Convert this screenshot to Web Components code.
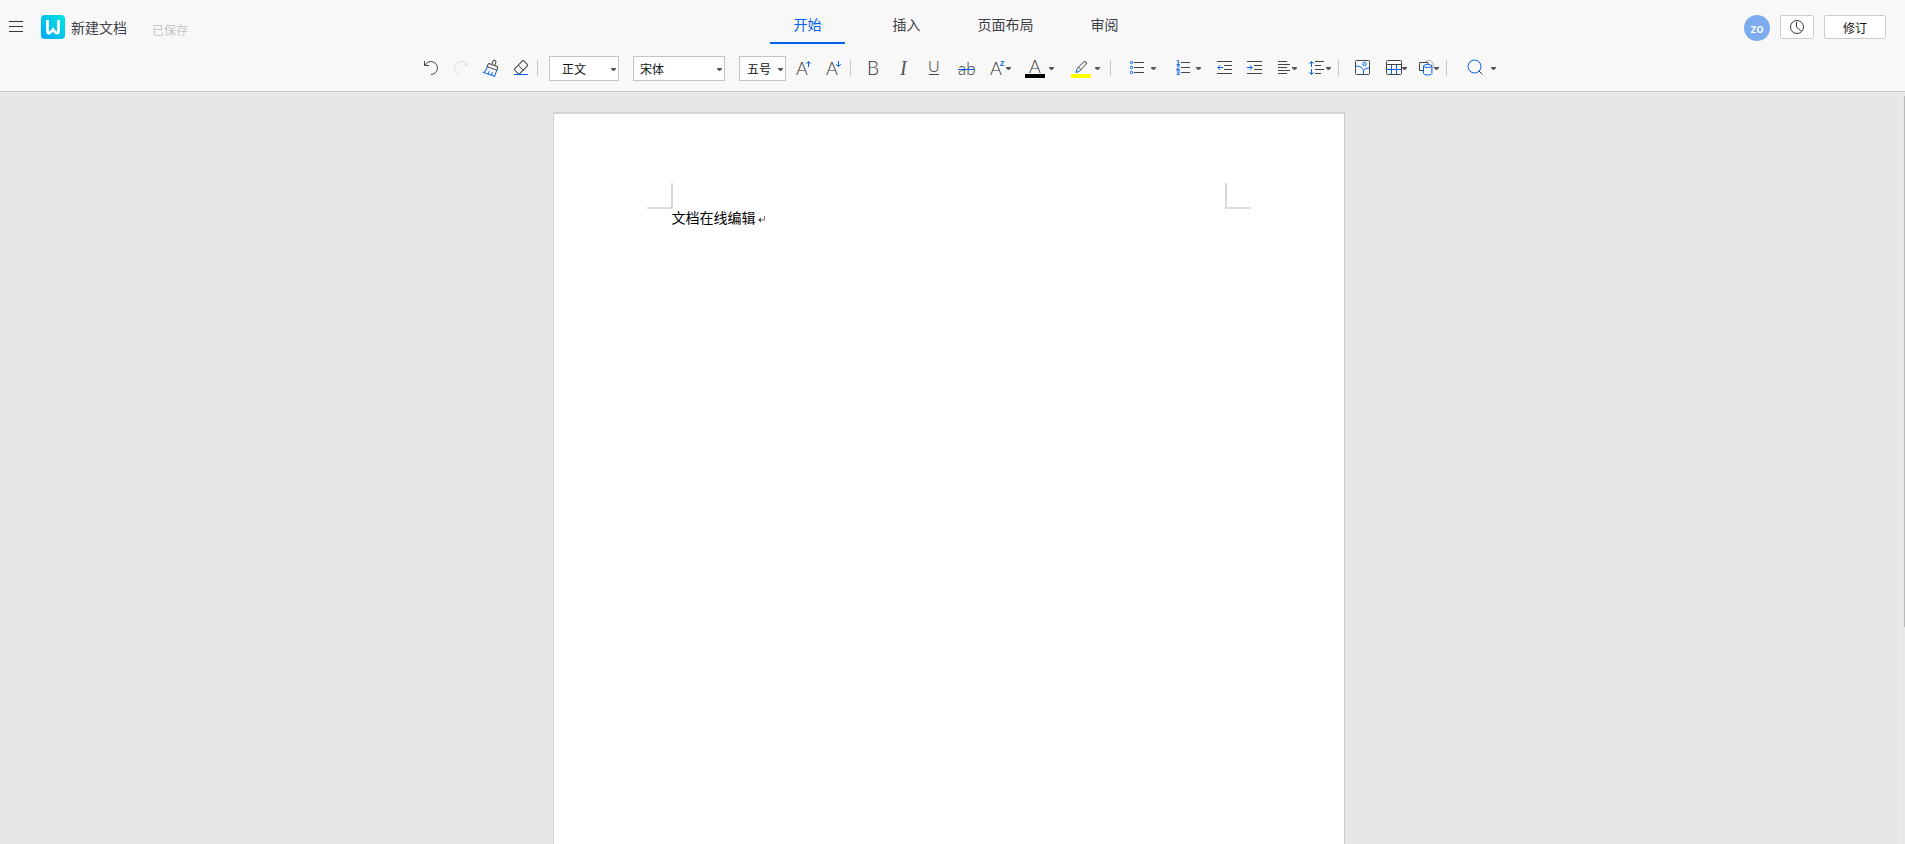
<!DOCTYPE html>
<html lang="zh-CN">
<head>
<meta charset="utf-8">
<title>新建文档</title>
<style>
html, body { margin: 0; height: 100%; }
body { font-family: "Noto Sans CJK SC", "Liberation Sans", sans-serif; color: #3d4047; background: #e7e7e7; overflow: hidden; }
</style>
</head>
<body>
<doc-app></doc-app>
<script>
const define = (name, html, setup) => {
  const template = document.createElement('template');
  template.innerHTML = html;
  customElements.define(name, class extends HTMLElement {
    connectedCallback() {
      if (this.shadowRoot) return;
      this.attachShadow({ mode: 'open' }).append(template.content.cloneNode(true));
      if (setup) setup(this, this.shadowRoot);
    }
  });
};

const letter = (ch, x, y, size, extra = '') =>
  `<text x="${x}" y="${y}" font-size="${size}" font-family="Lato, sans-serif" font-weight="300" fill="#333" stroke="none" ${extra}>${ch}</text>`;
const digits = ['1', '2', '3'].map((d, i) =>
  `<text x="1" y="${7 + i * 5}" font-size="7" font-family="Liberation Sans, sans-serif" font-weight="700" fill="#0062ee" stroke="none">${d}</text>`).join('');

/* Icons are drawn on a 20px high canvas; "b" is the accent stroke. */
const ICONS = {
  undo: [16, '<path d="M1.5 3v4.5H6M2 7.3A6.5 6.5 0 1 1 8 16.5"/>'],
  redo: [16, '<path stroke="#dedede" d="M14.5 3v4.5H10M14 7.3A6.5 6.5 0 1 0 8 16.5"/>'],
  painter: [16, '<g transform="rotate(20 8 10)"><path d="M7.500 6.500V3.200a1.600 1.600 0 0 1 3.200 0v3.300M4 10V7.500q0-1 1-1h8.200q1 0 1 1V10z"/><path class="b" d="M4 10v2.500q0 2.500-1.500 4.200H14.200V10M7.500 16.500v-3M10.800 16.500v-3"/></g>'],
  eraser: [16, '<rect x="1.500" y="5.800" width="13" height="7" rx="1.200" transform="rotate(-45 8 9.300)"/><path d="M5.200 7.200l5 5"/><path class="b" d="M1 16.500h14"/>'],
  grow: [16, letter('A', 0, 17, 18) + '<path class="b" d="M12.500 9V3.500M10.300 5.700l2.200-2.200 2.200 2.200"/>'],
  shrink: [16, letter('A', 0, 17, 18) + '<path class="b" d="M12.500 3v5.500M10.300 6.300l2.200 2.200 2.200-2.200"/>'],
  bold: [16, letter('B', 1, 17, 19)],
  italic: [16, '<text x="4" y="17" font-size="20" font-family="Liberation Serif, serif" font-style="italic" fill="#555" stroke="none">I</text>'],
  underline: [16, letter('U', 2, 14, 16) + '<path d="M3 16.500h10"/>'],
  strike: [20, letter('ab', 3, 17, 17) + '<path class="b" d="M3 11.500h16"/>'],
  super: [16, letter('A', 0, 17, 18) + '<text x="10" y="8" font-size="7" font-family="Liberation Sans, sans-serif" font-weight="700" fill="#0062ee" stroke="none">Z</text>'],
  color: [20, letter('A', 4, 15, 18) + '<path fill="#000" stroke="none" d="M0 16h20v4H0z"/>'],
  marker: [20, '<path d="M6 10.500L13 3.800q1-.8 2 .2t.2 2L8.500 13.200M7.500 9.200l2.500 2.500"/><path class="b" d="M6.200 10.500l-1.200 4 3.600-1.300"/><path fill="#ff0" stroke="none" d="M0 16h20v4H0z"/>'],
  bullets: [16, '<g class="b"><circle cx="1.500" cy="4.500" r="1.200"/><circle cx="1.500" cy="9.500" r="1.200"/><circle cx="1.500" cy="14.500" r="1.200"/></g><path d="M4 4.500h10M4 9.500h10M4 14.500h10"/>'],
  numbers: [16, digits + '<path d="M6 4.500h9M6 9.500h9M6 14.500h9"/>'],
  outdent: [16, '<path d="M1 3.500h15M8 7.500h8M8 11.500h8M1 15.500h15"/><path class="b" d="M7 9.500H2M4 7.300L1.800 9.500 4 11.700"/>'],
  indent: [16, '<path d="M1 3.500h15M8 7.500h8M8 11.500h8M1 15.500h15"/><path class="b" d="M1 9.500h5M4 7.300l2.200 2.200L4 11.700"/>'],
  align: [14, '<path d="M0 3.500h9M0 6.500h12M0 9.500h9M0 12.500h12M0 15.500h9"/>'],
  spacing: [16, '<path d="M5 3.500h9M5 7.500h6M5 11.500h9M5 15.500h6"/><path class="b" d="M1.500 9V3.500M-.700 5.700l2.200-2.200 2.200 2.200M1.500 11v5.500M-.700 14.300l2.200 2.200 2.200-2.200"/>'],
  picture: [16, '<rect x="1.500" y="2.500" width="14" height="14" rx="1"/><path class="b" d="M2 8q6 0 7.500 4.500v4M9.500 12.500q2-3 6-2.500"/><circle class="b" cx="10.500" cy="6" r="1.700"/>'],
  table: [16, '<path class="b" d="M1 11.500h14M5.500 7v9M10.500 7v9"/><rect x=".5" y="2.500" width="15" height="14" rx="1"/><path d="M.5 6.500h15"/>'],
  shapes: [16, '<circle cx="10.500" cy="7.500" r="5" stroke="#aaa"/><path fill="#f8f8f8" d="M1.500 4.500h8.500v8H1.500z"/><path class="b" fill="#f8f8f8" d="M5.500 8v7.500q0 1.500 4.200 1.500t4.200-1.500V8q0-1.500-4.200-1.500T5.500 8q0 1.500 4.200 1.500T13.900 8"/>'],
  search: [16, '<circle class="b" cx="7.500" cy="8.500" r="6.500"/><path d="M12 13l3.500 3.500"/>']
};

define('tool-button', `<style>
  :host { display: block; flex: none; width: 30px; }
  :host([size="m"]) { width: 32px; }
  :host([size="l"]) { width: 36px; }
  :host([size="xl"]) { width: 45px; }
  :host([size="xxl"]) { width: 46px; }
  button { box-sizing: border-box; width: 100%; height: 24px; margin: 0; padding: 0; border: 0; background: none; display: flex; align-items: center; justify-content: center; cursor: pointer; }
  :host([menu]) button { justify-content: flex-start; padding-left: 9px; }
  :host([menu="split"]) button { padding-left: 8px; gap: 4px; }
  :host([menu="list"]) button { padding-left: 11px; gap: 5px; }
  :host([menu="wide"]) button { padding-left: 12px; gap: 8px; }
  svg { flex: none; fill: none; stroke: #444; overflow: visible; }
  .b { stroke: #0062ee; }
  .caret { fill: #555; stroke: none; display: none; }
  :host([menu]) .caret { display: block; }
</style><button type="button"><svg class="icon" height="20" aria-hidden="true"></svg><svg class="caret" width="5" height="20" aria-hidden="true"><path d="M0 9h5v1L3 12H2L0 10z"/></svg></button>`,
(host, root) => {
  const [width, art] = ICONS[host.getAttribute('icon')];
  const icon = root.querySelector('.icon');
  icon.setAttribute('width', width);
  icon.innerHTML = art;
  root.querySelector('button').setAttribute('aria-label', host.getAttribute('label'));
});

define('tool-divider', `<style>
  :host { display: block; flex: none; width: 1px; height: 16px; margin: 4px 8px 0 1px; background: #c8c8c8; }
</style>`);

define('tool-select', `<style>
  :host { display: block; flex: none; position: relative; width: 70px; margin-right: 14px; --inset: 12px; }
  :host([kind="font"]) { width: 92px; --inset: 6px; }
  :host([kind="size"]) { width: 47px; margin-right: 3px; --inset: 7px; }
  :host([kind="style"]) { margin-left: 3px; }
  select { appearance: none; box-sizing: border-box; display: block; width: 100%; height: 25px; margin: 0; padding: 0 0 0 var(--inset); border: 1px solid #c4c4c4; border-radius: 0; background: #fff; color: #111; font: 12px/22px "Noto Sans CJK SC", sans-serif; }
  svg { position: absolute; right: 3px; top: 12px; fill: #555; pointer-events: none; }
</style><select></select><svg width="5" height="3" aria-hidden="true"><path d="M0 0h5v1L3 3H2L0 1z"/></svg>`,
(host, root) => {
  const select = root.querySelector('select');
  select.setAttribute('aria-label', host.getAttribute('label'));
  select.add(new Option(host.getAttribute('value')));
});

define('tab-item', `<style>
  :host { display: block; width: 75px; }
  button { box-sizing: border-box; width: 100%; height: 44px; margin: 0; padding: 6px 0 0; border: 0; border-bottom: 2px solid transparent; background: none; color: #3d4047; font: 14px/36px "Noto Sans CJK SC", sans-serif; white-space: nowrap; cursor: pointer; }
  :host([active]) button { color: #0062ee; border-bottom-color: #0062ee; }
</style><button type="button"><slot></slot></button>`);

define('doc-identity', `<style>
  :host { display: flex; align-items: flex-start; padding: 15px 0 0 9px; }
  button { margin: 0; padding: 6px 0 0; border: 0; background: none; display: block; }
  svg { display: block; }
  .logo { margin-left: 18px; }
  h1 { margin: 0 0 0 6px; font-size: 14px; line-height: 24px; font-weight: 400; }
  span { margin: 3px 0 0 25px; font-size: 12px; line-height: 24px; color: #c4c4c4; }
</style>
<button type="button" aria-label="菜单"><svg width="14" height="12" stroke="#333"><path d="M0 .5h14M0 5.500h14M0 10.500h14"/></svg></button>
<svg class="logo" width="24" height="24" aria-hidden="true"><defs><linearGradient id="g" x1="1" y1="0" x2="0" y2="1"><stop offset="0" stop-color="#00e6dc"/><stop offset="1" stop-color="#00a8fa"/></linearGradient></defs><rect width="24" height="24" rx="4" fill="url(#g)"/><path d="M6.500 5v11q0 2.500 1.500 2.200T12 14.500q2.500 3.500 4 3.700t1.500-2.200V5" fill="none" stroke="#fff" stroke-width="2.800"/></svg>
<h1>新建文档</h1><span>已保存</span>`);

define('user-actions', `<style>
  :host { display: flex; align-items: flex-start; justify-content: flex-end; gap: 10px; padding: 15px 19px 0 0; }
  .avatar { width: 26px; height: 26px; border-radius: 50%; background: #7cabee; color: #fff; font: 600 12px/28px "Open Sans", sans-serif; text-align: center; }
  button { box-sizing: border-box; height: 24px; margin: 0; padding: 0; border: 1px solid #ccc; border-radius: 2px; background: #fff; color: #111; font: 12px/24px "Noto Sans CJK SC", sans-serif; }
  .history { width: 34px; display: flex; align-items: center; justify-content: center; }
  .revise { width: 62px; }
</style>
<div class="avatar">zo</div>
<button class="history" type="button" aria-label="历史版本"><svg width="16" height="16" fill="none" stroke="#333"><circle cx="8" cy="8" r="6.500"/><path d="M7.500 3v5l4.500 4"/></svg></button>
<button class="revise" type="button">修订</button>`);

define('app-header', `<style>
  :host { display: block; flex: none; background: #f8f8f8; border-bottom: 1px solid #c8c8c8; }
  .top { display: grid; grid-template-columns: 1fr auto 1fr; height: 44px; }
  nav { display: flex; gap: 24px; margin-left: 7px; }
  .tools { display: flex; justify-content: center; align-items: flex-start; height: 35px; padding: 12px 0 0 12px; }
</style>
<div class="top">
  <doc-identity></doc-identity>
  <nav><tab-item active>开始</tab-item><tab-item>插入</tab-item><tab-item>页面布局</tab-item><tab-item>审阅</tab-item></nav>
  <user-actions></user-actions>
</div>
<div class="tools" role="toolbar">
  <tool-button icon="undo" label="撤销"></tool-button>
  <tool-button icon="redo" label="恢复"></tool-button>
  <tool-button icon="painter" label="格式刷"></tool-button>
  <tool-button icon="eraser" label="清除格式"></tool-button>
  <tool-divider></tool-divider>
  <tool-select kind="style" label="样式" value="正文"></tool-select>
  <tool-select kind="font" label="字体" value="宋体"></tool-select>
  <tool-select kind="size" label="字号" value="五号"></tool-select>
  <tool-button icon="grow" label="增大字号"></tool-button>
  <tool-button icon="shrink" label="减小字号"></tool-button>
  <tool-divider></tool-divider>
  <tool-button icon="bold" label="加粗"></tool-button>
  <tool-button icon="italic" label="倾斜"></tool-button>
  <tool-button icon="underline" label="下划线"></tool-button>
  <tool-button icon="strike" label="删除线" size="m"></tool-button>
  <tool-button icon="super" label="上标" size="l" menu></tool-button>
  <tool-button icon="color" label="字体颜色" size="xxl" menu="split"></tool-button>
  <tool-button icon="marker" label="突出显示" size="xxl" menu="split"></tool-button>
  <tool-divider></tool-divider>
  <tool-button icon="bullets" label="项目符号" size="xl" menu="list"></tool-button>
  <tool-button icon="numbers" label="编号" size="xl" menu="list"></tool-button>
  <tool-button icon="outdent" label="减少缩进"></tool-button>
  <tool-button icon="indent" label="增加缩进"></tool-button>
  <tool-button icon="align" label="对齐" size="m" menu></tool-button>
  <tool-button icon="spacing" label="行距" size="l" menu></tool-button>
  <tool-divider></tool-divider>
  <tool-button icon="picture" label="图片"></tool-button>
  <tool-button icon="table" label="表格" size="m" menu></tool-button>
  <tool-button icon="shapes" label="形状" size="l" menu></tool-button>
  <tool-divider></tool-divider>
  <tool-button icon="search" label="查找" size="xxl" menu="wide"></tool-button>
</div>`);

define('doc-page', `<style>
  :host { box-sizing: border-box; display: block; width: 792px; background: #fff; border: 1px solid #c8c8c8; border-top: 2px solid #d4d4d4; border-left-color: #d4d4d4; border-bottom: 0; }
  .marks { display: flex; justify-content: space-between; padding: 69px 93px 0; }
  .marks i { box-sizing: border-box; width: 26px; height: 26px; border: 0 solid #dcdcdc; border-bottom-width: 2px; }
  .marks i:first-child { border-right: 2px solid #d8d8d8; }
  .marks i:last-child { border-left: 2px solid #d8d8d8; }
  .body { padding: 0 118px; }
  p { margin: 0; display: flex; align-items: center; color: #000; font-size: 14px; line-height: 16px; }
  svg { margin: 4px 0 0 1px; fill: none; stroke: #777; }
</style>
<div class="marks"><i></i><i></i></div>
<div class="body"><p><slot></slot><svg width="9" height="9" aria-hidden="true"><path d="M7.500 1v4H2"/><path d="M4 2.500v5L1 5z" fill="#555" stroke="none"/></svg></p></div>`);

define('doc-app', `<style>
  :host { display: flex; flex-direction: column; height: 100vh; overflow: hidden; }
  main { flex: 1; min-height: 0; display: flex; background: #e7e7e7; }
  .canvas { flex: 1; display: flex; justify-content: center; padding-top: 20px; }
  .scroll { width: 8px; box-sizing: border-box; padding: 4px 0 0 7px; background: #e9e9e9; }
  .thumb { height: 71%; background: #b8b8b8; }
</style>
<app-header></app-header>
<main><div class="canvas"><doc-page>文档在线编辑</doc-page></div><div class="scroll"><div class="thumb"></div></div></main>`);
</script>
</body>
</html>
